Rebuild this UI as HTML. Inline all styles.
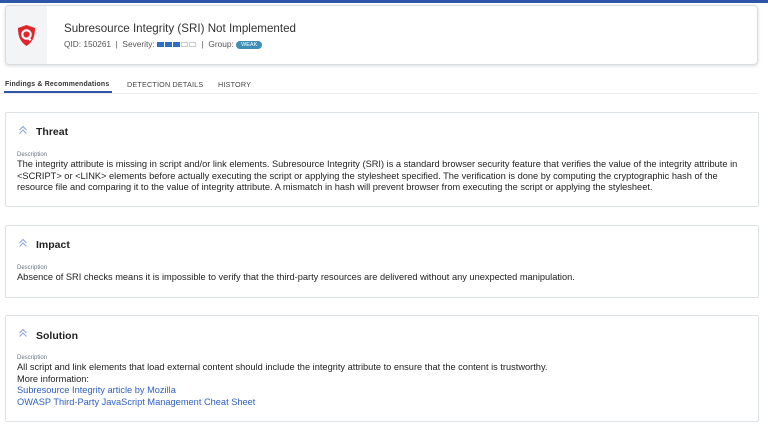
<!DOCTYPE html>
<html><head><style>
body{margin:0;width:768px;height:430px;background:#fff;font-family:"Liberation Sans",sans-serif;position:relative;overflow:hidden;color:#222}
.bar{position:absolute;left:0;top:0;width:768px;height:3px;background:#2d56a8}
.hdr{position:absolute;left:5px;top:5px;width:751px;height:58px;border:1px solid #d8dde2;border-radius:4px;box-shadow:0 1px 3px rgba(0,0,0,.15);background:#fff;overflow:hidden}
.hdr .ic{position:absolute;left:0;top:0;width:41px;height:58px;background:#f3f4f6}
.title{position:absolute;left:58px;top:16px;font-size:11.6px;color:#333}
.sub{position:absolute;left:58px;top:33px;font-size:8.3px;color:#555}
.sev{display:inline-block;width:7px;height:5px;margin-right:1px;background:#2e6fc4;vertical-align:0}
.sev.e{background:#fff;border:1px solid #ccc;width:5px;height:3px}
.badge{display:inline-block;background:#3d8fb5;color:#fff;font-size:5.5px;padding:1px 5px;border-radius:5px;vertical-align:1px}
.tabs{position:absolute;top:80px;font-size:7.2px;line-height:9px;color:#444;letter-spacing:.2px}
.tl{position:absolute;left:0;top:93px;width:758px;height:1px;background:#eceef0}
.ul{position:absolute;left:4px;top:91px;width:108px;height:2px;background:#2d56a8}
.card{position:absolute;left:5px;width:752px;border:1px solid #dde2e6;border-radius:2px;background:#fff}
.card h3{position:absolute;left:30px;margin:0;font-size:10.5px;font-weight:bold;color:#222}
.chev{position:absolute;left:12px}
.d{position:absolute;left:11px;font-size:6px;color:#6a7585}
.t{position:absolute;left:11px;width:728px;font-size:9.25px;line-height:11.5px;color:#222}
a{color:#2f5fc0;text-decoration:none}
</style></head><body>
<div class="bar"></div>
<div class="hdr"><div class="ic">
<svg width="41" height="58" viewBox="0 0 41 58"><path d="M20.5 19 L29 22 C29 31 26.5 36 20.5 40 C14.5 36 12 31 12 22 Z" fill="#e0262b"/><circle cx="20.5" cy="28.5" r="4.2" fill="none" stroke="#fff" stroke-width="2.2"/><path d="M22 31 L24.5 34.5" stroke="#fff" stroke-width="2.2"/></svg>
</div>
<div class="title">Subresource Integrity (SRI) Not Implemented</div>
<div class="sub">QID: 150261 &nbsp;|&nbsp; Severity: <span class="sev"></span><span class="sev"></span><span class="sev"></span><span class="sev e"></span><span class="sev e"></span> &nbsp;|&nbsp; Group: <span class="badge">WEAK</span></div>
</div>
<div class="tabs" style="left:5px;font-weight:bold;color:#333;font-size:6.9px">Findings &amp; Recommendations</div>
<div class="tabs" style="left:127px">DETECTION DETAILS</div>
<div class="tabs" style="left:218px">HISTORY</div>
<div class="tl"></div><div class="ul"></div>

<div class="card" style="top:112px;height:93px">
<svg class="chev" style="top:12px" width="10" height="10" viewBox="0 0 10 10"><path d="M1.5 5 L5 1.5 L8.5 5 M1.5 8.5 L5 5 L8.5 8.5" fill="none" stroke="#8aa6d6" stroke-width="1"/></svg><h3 style="top:13px">Threat</h3>
<div class="d" style="top:39px">Description</div>
<div class="t" style="top:46px">The integrity attribute is missing in script and/or link elements. Subresource Integrity (SRI) is a standard browser security feature that verifies the value of the integrity attribute in &lt;SCRIPT&gt; or &lt;LINK&gt; elements before actually executing the script or applying the stylesheet specified. The verification is done by computing the cryptographic hash of the resource file and comparing it to the value of integrity attribute. A mismatch in hash will prevent browser from executing the script or applying the stylesheet.</div>
</div>

<div class="card" style="top:225px;height:71px">
<svg class="chev" style="top:12px" width="10" height="10" viewBox="0 0 10 10"><path d="M1.5 5 L5 1.5 L8.5 5 M1.5 8.5 L5 5 L8.5 8.5" fill="none" stroke="#8aa6d6" stroke-width="1"/></svg><h3 style="top:13px">Impact</h3>
<div class="d" style="top:39px">Description</div>
<div class="t" style="top:46px">Absence of SRI checks means it is impossible to verify that the third-party resources are delivered without any unexpected manipulation.</div>
</div>

<div class="card" style="top:315px;height:105px">
<svg class="chev" style="top:12px" width="10" height="10" viewBox="0 0 10 10"><path d="M1.5 5 L5 1.5 L8.5 5 M1.5 8.5 L5 5 L8.5 8.5" fill="none" stroke="#8aa6d6" stroke-width="1"/></svg><h3 style="top:14px">Solution</h3>
<div class="d" style="top:39px">Description</div>
<div class="t" style="top:46px">All script and link elements that load external content should include the integrity attribute to ensure that the content is trustworthy.<br>More information:<br><a>Subresource Integrity article by Mozilla</a><br><a>OWASP Third-Party JavaScript Management Cheat Sheet</a></div>
</div>
</body></html>
